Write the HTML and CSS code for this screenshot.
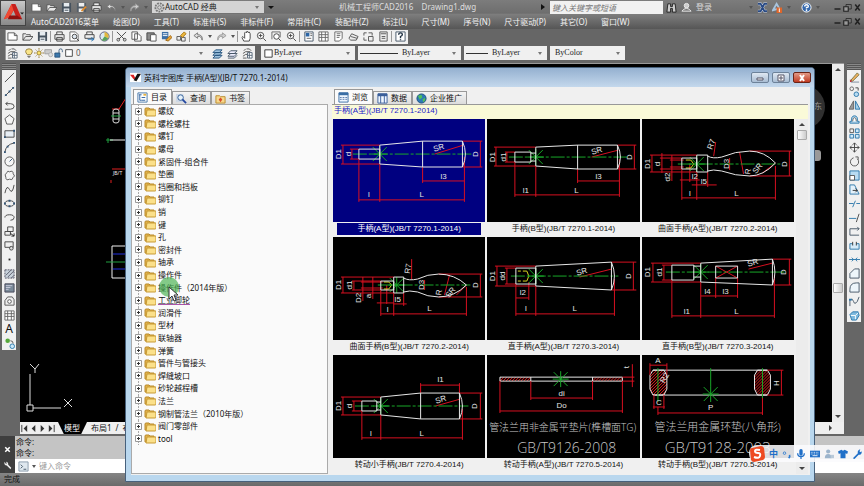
FILE: index.html
```html
<!DOCTYPE html>
<html lang="zh-CN">
<head>
<meta charset="utf-8">
<title>机械工程师CAD2016</title>
<link rel="stylesheet" href="styles.css">
</head>
<body>
<svg class="defs" aria-hidden="true">
  <defs>
    <symbol id="new" viewBox="0 0 12 12"><path d="M1 2h7l3 3v5H1z" fill="#fff" stroke="#555"/><path d="M8 2v3h3" fill="none" stroke="#555"/></symbol>
    <symbol id="open" viewBox="0 0 12 12"><path d="M1 10V3h3l1 1h4v2M1 10l3-4h8l-3 4z" fill="#e8e8e8" stroke="#555"/></symbol>
    <symbol id="save" viewBox="0 0 12 12"><path d="M1 1h10v10H1z" fill="#46525e"/><path d="M3 1h6v4H3zM3 7h6v4H3z" fill="#e6ebef"/><path d="M4 9h4" stroke="#46525e"/></symbol>
    <symbol id="saveas" viewBox="0 0 12 12"><path d="M1 1h10v10H1z" fill="#555f69"/><path d="M3 1h6v4H3zM3 7h5v4H3z" fill="#eee"/><path d="M6 10l5-5" stroke="#e08b2c" stroke-width="2"/></symbol>
    <symbol id="print" viewBox="0 0 12 12"><path d="M3 4V1h6v3M1 4h10v5H1zM3 7h6v4H3z" fill="#eee" stroke="#444"/></symbol>
    <symbol id="preview" viewBox="0 0 12 12"><path d="M1 1h6l3 3v7H1z" fill="#fff" stroke="#666"/><circle cx="6" cy="6" r="2.5" fill="#dfe8f0" stroke="#444"/><path d="M8 8l3 3" stroke="#444"/></symbol>
    <symbol id="publish" viewBox="0 0 12 12"><path d="M3 4V1h6v3M1 4h10v4H1z" fill="#eee" stroke="#444"/><path d="M4 9h6M8 7l3 2-3 2" stroke="#2470b0" fill="none"/></symbol>
    <symbol id="globe" viewBox="0 0 12 12"><circle cx="6" cy="6" r="5" fill="#dbe9f3" stroke="#557"/><path d="M6 6V1a5 5 0 0 1 4 7z" fill="#e2b73d"/><path d="M6 6l4 2a5 5 0 0 1-7 2z" fill="#58a35a"/></symbol>
    <symbol id="cut" viewBox="0 0 12 12"><path d="M1 1l8 8M11 1L3 9" stroke="#444" fill="none"/><circle cx="2.500" cy="9.500" r="1.500" fill="none" stroke="#444"/><circle cx="9.500" cy="9.500" r="1.500" fill="none" stroke="#444"/></symbol>
    <symbol id="copy" viewBox="0 0 12 12"><path d="M1 1h6v8H1zM4 3h4l3 3v5H4z" fill="#fff" stroke="#555"/></symbol>
    <symbol id="paste" viewBox="0 0 12 12"><path d="M1 2h8v8H1z" fill="#8b8b8b" stroke="#444"/><path d="M5 4h6v7H5z" fill="#fff" stroke="#555"/></symbol>
    <symbol id="match" viewBox="0 0 12 12"><path d="M1 1h7v8H1z" fill="#3b6ea6"/><path d="M2 3h5M2 5h5" stroke="#fff"/><path d="M5 10l5-5 2 2-4 4z" fill="#e7a43a" stroke="#9a6511"/></symbol>
    <symbol id="block" viewBox="0 0 12 12"><path d="M1 6h4v4H1zM6 7h4v4H6z" fill="#eee" stroke="#555"/><path d="M5 5l4-4 2 2-4 4z" fill="#eeb940" stroke="#a87511"/></symbol>
    <symbol id="undo" viewBox="0 0 12 12"><path d="M5 2L1 5l4 3V6q4-1 5 4 1-6-5-6z" fill="#ddd" stroke="#777"/></symbol>
    <symbol id="redo" viewBox="0 0 12 12"><path d="M7 2l4 3-4 3V6q-4-1-5 4-1-6 5-6z" fill="#ccc" stroke="#999"/></symbol>
    <symbol id="pan" viewBox="0 0 12 12"><path d="M3 11L1 7l1-1 2 2V2l1-1 1 1V1l1-1 1 2 1-1 1 2v5l-1 3z" fill="#fff" stroke="#444"/></symbol>
    <symbol id="zoom" viewBox="0 0 12 12"><circle cx="5" cy="5" r="3.500" fill="#fff" stroke="#444"/><path d="M8 8l3 3M5 3v4M3 5h4" stroke="#444"/></symbol>
    <symbol id="zoomwin" viewBox="0 0 12 12"><path d="M1 9V1h9v6" fill="none" stroke="#666"/><circle cx="6" cy="6" r="3" fill="#fff" stroke="#444"/><path d="M8 8l3 3" stroke="#444"/></symbol>
    <symbol id="props" viewBox="0 0 12 12"><path d="M2 1h9v10H2z" fill="#fff" stroke="#456"/><path d="M3 2h4v4H3z" fill="#2b65a5"/><path d="M4 8h5M8 3h2M8 5h2" stroke="#666"/></symbol>
    <symbol id="grid" viewBox="0 0 12 12"><path d="M1 1h10v10H1zM1 4h10M1 7h10M4 1v10M8 1v10" fill="#fff" stroke="#666"/></symbol>
    <symbol id="palette" viewBox="0 0 12 12"><path d="M2 1h8v7l-3 3H2zM4 3h4M4 5h4M4 7h3" fill="#fff" stroke="#666"/></symbol>
    <symbol id="cloudset" viewBox="0 0 12 12"><path d="M1 8L4 3l7 3-2 4H3zM3 6l7 2" fill="#eee" stroke="#555"/></symbol>
    <symbol id="markup" viewBox="0 0 12 12"><path d="M1 5V2h3M6 2h4v3M1 7v3h3M6 6h5v5H6z" fill="#eee" stroke="#555"/></symbol>
    <symbol id="calc" viewBox="0 0 12 12"><path d="M2 1h8v10H2zM3 3h6M4 6h4M4 8h4" fill="#eee" stroke="#555"/></symbol>
    <symbol id="help" viewBox="0 0 12 12"><path d="M1 1h10v10H1z" fill="#fff" stroke="#456"/><path d="M4 4q0-2 2-2t2 2q0 1-2 2v2M6 9v1" fill="none" stroke="#234" stroke-width="1.500"/></symbol>
    <symbol id="layers" viewBox="0 0 12 12"><path d="M1 6l3-3h7L8 6zM1 9l3-3h7L8 9zM1 11h7l3-3" fill="#eef" stroke="#456"/></symbol>
    <symbol id="layersb" viewBox="0 0 12 12"><path d="M1 5l3-3h7L8 5zM1 8l3-3h7L8 8zM1 11l3-3h7l-3 3z" fill="#9fc3df" stroke="#24527c"/></symbol>
    <symbol id="layermgr" viewBox="0 0 12 12"><path d="M1 6l3-2h5M1 9l3-2h2M1 11h4M4 1l-2 2M5 1h3l2 2" fill="none" stroke="#555"/><path d="M6 5h5v6H6zM8 5v6M6 8h5" fill="#fff" stroke="#567"/></symbol>
    <symbol id="bulb" viewBox="0 0 12 12"><path d="M4 8Q2 6 2 4q0-3 4-3t4 3q0 2-2 4z" fill="#f9e58a" stroke="#8c7430"/><path d="M4 10h4M5 11h2" stroke="#555"/></symbol>
    <symbol id="sun" viewBox="0 0 12 12"><circle cx="6" cy="6" r="2.500" fill="#fbe36b" stroke="#8c6d20"/><path d="M6 0v2M6 10v2M0 6h2M10 6h2M2 2l1 1M9 9l1 1M2 10l1-1M9 3l1-1" stroke="#8c6d20"/></symbol>
    <symbol id="freeze" viewBox="0 0 12 12"><path d="M1 2h8v5H1z" fill="#ccc" stroke="#999"/><circle cx="8" cy="8" r="2.500" fill="#ddd" stroke="#aaa"/></symbol>
    <symbol id="lock" viewBox="0 0 12 12"><path d="M1 6h6v5H1z" fill="#3c78ac" stroke="#254f77"/><path d="M6 6V3q0-2 2-2t2 2v2" fill="none" stroke="#357"/></symbol>
    <symbol id="swatch" viewBox="0 0 12 12"><path d="M2 2h8v8H2z" fill="#fff" stroke="#333"/></symbol>
    <symbol id="gear" viewBox="0 0 12 12"><circle cx="6" cy="6" r="4.500" fill="none" stroke="#777" stroke-width="2" stroke-dasharray="2 1"/><circle cx="6" cy="6" r="2" fill="none" stroke="#777"/></symbol>
    <symbol id="bino" viewBox="0 0 12 12"><path d="M2 2h3v3h2V2h3l1 9H7V7H5v4H1z" fill="#ccc" stroke="#222"/></symbol>
    <symbol id="user" viewBox="0 0 12 12"><circle cx="6" cy="4" r="2.500" fill="#ccc" stroke="#eee"/><path d="M1 10q2-3 5-3t5 3z" fill="#777" stroke="#eee"/></symbol>
    <symbol id="exchange" viewBox="0 0 12 12"><path d="M1 2h3l4 8h3M11 2H8L4 10H1" fill="none" stroke="#c6d4ea" stroke-width="3"/><path d="M1 2h3l4 8h3M11 2H8L4 10H1" fill="none" stroke="#2a4a83" stroke-width="2"/></symbol>
    <symbol id="a360" viewBox="0 0 12 12"><path d="M1 9l4-7 3 5z" fill="none" stroke="#a8c4de" stroke-width="2"/><path d="M5 6h6v6H5z" fill="#e0662a"/><path d="M8 7v4" stroke="#fff"/></symbol>
    <symbol id="helpc" viewBox="0 0 12 12"><circle cx="6" cy="6" r="5" fill="#3468ad" stroke="#fff"/><path d="M4 5q0-2 2-2t2 2q0 1-2 1v1M6 8v2" fill="none" stroke="#fff" stroke-width="1.500"/></symbol>
    <symbol id="minus" viewBox="0 0 12 12"><path d="M2 8h8" stroke="#222" stroke-width="2"/></symbol>
    <symbol id="restore" viewBox="0 0 12 12"><path d="M4 2h7v6H4z" fill="#777" stroke="#222"/><path d="M1 5h6v6H1z" fill="#999" stroke="#222" stroke-width="1.500"/></symbol>
    <symbol id="close" viewBox="0 0 12 12"><path d="M3 2l6 8M9 2l-6 8" stroke="#222" stroke-width="2"/></symbol>
    <symbol id="s-first" viewBox="0 0 10 10"><path d="M2 1v8" stroke="#333"/><path d="M8 1v8L4 5z" fill="#333"/></symbol>
    <symbol id="s-prev" viewBox="0 0 10 10"><path d="M7 1v8L3 5z" fill="#333"/></symbol>
    <symbol id="s-next" viewBox="0 0 10 10"><path d="M3 1v8l4-4z" fill="#333"/></symbol>
    <symbol id="s-last" viewBox="0 0 10 10"><path d="M8 1v8" stroke="#333"/><path d="M2 1v8l4-4z" fill="#333"/></symbol>

    <symbol id="d-line" viewBox="0 0 12 12"><path d="M1 11L11 1" stroke="#444"/></symbol>
    <symbol id="d-ray" viewBox="0 0 12 12"><path d="M1 11L11 1" stroke="#444"/><path d="M1 10h2M5 6h2M9 2h2" stroke="#357" stroke-width="2"/></symbol>
    <symbol id="d-pline" viewBox="0 0 12 12"><path d="M1 10h6q4 0 4-3T7 4H2M4 2L2 4l2 2" fill="none" stroke="#444"/></symbol>
    <symbol id="d-poly" viewBox="0 0 12 12"><path d="M6 1l5 4-2 6H3L1 5z" fill="#f6f6f6" stroke="#555"/></symbol>
    <symbol id="d-rect" viewBox="0 0 12 12"><path d="M1 3h10v7H1z" fill="#e8eef4" stroke="#444"/><path d="M0 10h2M10 3h2" stroke="#357" stroke-width="2"/></symbol>
    <symbol id="d-arc" viewBox="0 0 12 12"><path d="M1 11Q2 3 11 1" fill="none" stroke="#444"/><path d="M0 11h2M3 5h2M10 1h2" stroke="#357" stroke-width="2"/></symbol>
    <symbol id="d-circle" viewBox="0 0 12 12"><circle cx="6" cy="6" r="5" fill="#f6f6f6" stroke="#555"/><path d="M6 6l3-3" stroke="#357"/></symbol>
    <symbol id="d-cloud" viewBox="0 0 12 12"><path d="M3 3q1-3 3-1 4-2 4 2 3 3 0 4-1 4-4 2-4 2-4-2-2-3 1-5z" fill="#f5f5f5" stroke="#555"/></symbol>
    <symbol id="d-spline" viewBox="0 0 12 12"><path d="M1 10Q3 0 6 6t5-5" fill="none" stroke="#444"/></symbol>
    <symbol id="d-ell" viewBox="0 0 12 12"><ellipse cx="6" cy="6" rx="5" ry="3" fill="none" stroke="#444"/><path d="M0 6h2M10 6h2M5 3h2M5 9h2" stroke="#357" stroke-width="2"/></symbol>
    <symbol id="d-ellarc" viewBox="0 0 12 12"><path d="M1 6q0-3 5-3t5 3-4 3" fill="none" stroke="#444"/></symbol>
    <symbol id="d-ins" viewBox="0 0 12 12"><path d="M4 1h6v5H4zM1 6h6v4H1z" fill="#eee" stroke="#444"/><path d="M7 8l4 3M11 8v3H8" stroke="#222" fill="none"/></symbol>
    <symbol id="d-make" viewBox="0 0 12 12"><path d="M1 2h9v6H1z" fill="#eee" stroke="#444"/><circle cx="8" cy="9" r="2" fill="#ddd" stroke="#444"/></symbol>
    <symbol id="d-point" viewBox="0 0 12 12"><path d="M5 6h2" stroke="#222" stroke-width="2"/></symbol>
    <symbol id="d-hatch" viewBox="0 0 12 12"><path d="M1 2h10v9H1z" fill="#c8d2db" stroke="#556" stroke-dasharray="2 1"/><path d="M2 8l6-6M4 10l7-7M8 11l3-3" stroke="#556"/></symbol>
    <symbol id="d-grad" viewBox="0 0 12 12"><path d="M1 2h10v9H1z" fill="#7a8a99" stroke="#445"/><path d="M2 4h7M2 6h5M2 8h3" stroke="#ccd"/></symbol>
    <symbol id="d-region" viewBox="0 0 12 12"><path d="M1 10V5l3-4h5l2 3v6z" fill="#eee" stroke="#555"/><circle cx="6" cy="6" r="2" fill="#fff" stroke="#555"/></symbol>
    <symbol id="d-add" viewBox="0 0 12 12"><circle cx="4" cy="3" r="2.500" fill="#55a83a"/><circle cx="9" cy="9" r="2.500" fill="#cde8f8" stroke="#2b7cb0"/><path d="M7 3q3 0 3 3" fill="none" stroke="#555"/></symbol>
    <symbol id="m-erase" viewBox="0 0 12 12"><path d="M2 9l7-8 2 2-7 7z" fill="#f0b060" stroke="#774"/><path d="M1 8l3 3H1z" fill="#c33"/><path d="M2 11h9" stroke="#789"/></symbol>
    <symbol id="m-copy" viewBox="0 0 12 12"><circle cx="3" cy="3" r="2" fill="none" stroke="#666"/><circle cx="8" cy="9" r="2.500" fill="#b9dcf2" stroke="#2b76aa"/><path d="M7 2h3v3" fill="none" stroke="#444"/></symbol>
    <symbol id="m-mirror" viewBox="0 0 12 12"><path d="M5 1v9H0z" fill="#999" stroke="#666"/><path d="M7 1v9h5z" fill="#a5cfe9" stroke="#2b76aa"/></symbol>
    <symbol id="m-offset" viewBox="0 0 12 12"><path d="M1 10h10V8H9q1-6-3-6T3 8H1z" fill="#b8daef" stroke="#2b76aa"/><path d="M4 8q0-4 2-4t2 4" fill="#fff" stroke="#666"/></symbol>
    <symbol id="m-array" viewBox="0 0 12 12"><path d="M1 1h4v4H1z" fill="#eee" stroke="#555"/><path d="M7 1h4v4H7zM1 7h4v4H1zM7 7h4v4H7z" fill="#cfe8f8" stroke="#2b76aa"/></symbol>
    <symbol id="m-move" viewBox="0 0 12 12"><path d="M6 1v10M1 6h10M4 3l2-2 2 2M4 9l2 2 2-2M3 4L1 6l2 2M9 4l2 2-2 2" fill="none" stroke="#444"/></symbol>
    <symbol id="m-rot" viewBox="0 0 12 12"><path d="M5 2a4.500 4.500 0 1 0 4 1M7 1h3v3" fill="none" stroke="#555"/></symbol>
    <symbol id="m-scale" viewBox="0 0 12 12"><path d="M1 1h10v10H1z" fill="#b9dcf2" stroke="#2b76aa"/><path d="M1 6h5v5H1z" fill="#fff" stroke="#555"/></symbol>
    <symbol id="m-stretch" viewBox="0 0 12 12"><path d="M1 1h5l5 10H1z" fill="#e4f1fa" stroke="#2b76aa"/><path d="M4 7h5M7 5l2 2-2 2" fill="none" stroke="#333"/></symbol>
    <symbol id="m-trim" viewBox="0 0 12 12"><path d="M0 6h5M7 3L4 10M8 6h4" stroke="#2b76aa"/></symbol>
    <symbol id="m-extend" viewBox="0 0 12 12"><path d="M0 7h8" stroke="#2b76aa"/><path d="M11 2L8 11" stroke="#444"/></symbol>
    <symbol id="m-break" viewBox="0 0 12 12"><path d="M1 4h3M8 4h3M1 4v6h10V4" fill="#d7ebf8" stroke="#2b76aa"/><path d="M4 2v4M8 2v4" stroke="#333"/></symbol>
    <symbol id="m-open" viewBox="0 0 12 12"><path d="M11 3H1v7h10M9 1l2 2-2 2" fill="none" stroke="#456"/></symbol>
    <symbol id="m-join" viewBox="0 0 12 12"><path d="M0 6h12M3 4l2 2-2 2M9 4L7 6l2 2" fill="none" stroke="#2b76aa"/></symbol>
    <symbol id="m-chamf" viewBox="0 0 12 12"><path d="M1 11V6l5-5h5v10z" fill="#eef6fb" stroke="#456"/></symbol>
    <symbol id="m-fillet" viewBox="0 0 12 12"><path d="M1 11V8q0-7 7-7h3v10z" fill="#eef6fb" stroke="#456"/></symbol>
    <symbol id="m-blend" viewBox="0 0 12 12"><path d="M1 11V4q3-2 4 2t4 0l2-5" fill="none" stroke="#456"/><path d="M0 4h3" stroke="#2b76aa" stroke-width="2"/></symbol>
    <symbol id="m-expl" viewBox="0 0 12 12"><path d="M1 5l3-3h6l1 4-3 5H3z" fill="#7db9de" stroke="#2b76aa"/><path d="M2 6h5v4M7 6l3-3" fill="none" stroke="#fff"/></symbol>

    <symbol id="folder" viewBox="0 0 12 11"><path d="M1 9V3q0-1 1-1h3l1 1h4v6z" fill="#e2b24a" stroke="#b98a2a"/><path d="M2 10l1-6h9v5q0 1-1 1z" fill="#fbe08a" stroke="#c79a35"/></symbol>
    <symbol id="plus" viewBox="0 0 7 7"><path d="M.5.5h6v6h-6z" fill="#fff" stroke="#999"/><path d="M2 3.500h3M3.500 2v3" stroke="#333"/></symbol>
    <symbol id="t-dir" viewBox="0 0 12 12"><path d="M1 1h10v10H1z" fill="#fff" stroke="#4475a8"/><path d="M2 3h3M5 6h4M5 9h4M3 3v6h2" stroke="#2b5fa0" fill="none"/><path d="M7 2h3v2H7z" fill="#e7b13c"/></symbol>
    <symbol id="t-find" viewBox="0 0 12 12"><path d="M0 1h8v9H0z" fill="#cdd8e6"/><circle cx="5" cy="5" r="3" fill="#e6f2fb" stroke="#2e5b94"/><path d="M7 7l4 4" stroke="#2347a0" stroke-width="2"/></symbol>
    <symbol id="t-mark" viewBox="0 0 12 12"><path d="M1 3h4l1 1h5v7H1z" fill="#f7d78b" stroke="#b98a2a"/><path d="M4 7l2-2 2 2-2 3z" fill="#d94f2b"/></symbol>
    <symbol id="t-table" viewBox="0 0 12 12"><path d="M1 1h10v10H1z" fill="#eef6ff" stroke="#3a6ea5"/><path d="M1 2h10" stroke="#3a6ea5" stroke-width="3"/><path d="M2 6h2M5 6h2M8 6h2M2 8h2M5 8h2M8 8h2" stroke="#57a" stroke-width="1"/></symbol>
    <symbol id="t-cols" viewBox="0 0 12 12"><path d="M1 1h10v10H1z" fill="#eef6ff" stroke="#3a5e9a"/><path d="M1 2h10" stroke="#3a5e9a" stroke-width="3"/><path d="M4 3v8M8 3v8" stroke="#3a5e9a"/></symbol>
    <symbol id="t-globe" viewBox="0 0 12 12"><circle cx="6" cy="6" r="5" fill="#2d78b8" stroke="#1b4f7d"/><path d="M2 3l4-1 1 3-3 2zM7 7l3-2v3l-2 2z" fill="#4fc05b"/></symbol>
    <g id="star"><path d="M-8 0H8M0-8V8M-7-7L7 7M-7 7L7-7"/></g>
    <pattern id="hatch" width="3" height="3" patternUnits="userSpaceOnUse"><path d="M0 3L3 0" stroke="#f02020"/></pattern>
  </defs>
</svg>

<div class="app">
  <header class="top">
    <button class="logo" aria-label="应用程序菜单">
      <svg viewBox="0 0 25 25"><path d="M3 19L11 3h4l7 16-6-2-3-7-4 7z" fill="#c8201c"/><path d="M11 3l2 7-4 7-6 2z" fill="#ef4a33"/><path d="M9 15h8l5 4H7z" fill="#8f1210"/><path d="M20 12h4l-2 2z" fill="#222"/></svg>
    </button>
    <div class="top-rows">
      <div class="titlebar">
        <div class="icons quick">
          <button aria-label="新建"><svg><use href="#new"/></svg></button><button aria-label="打开"><svg><use href="#open"/></svg></button><button aria-label="保存"><svg><use href="#save"/></svg></button><button aria-label="另存为"><svg><use href="#saveas"/></svg></button><button aria-label="打印"><svg><use href="#print"/></svg></button><button aria-label="放弃"><svg><use href="#undo"/></svg></button><i class="arrow"></i><button aria-label="重做"><svg><use href="#redo"/></svg></button><i class="arrow"></i>
        </div>
        <div class="combo workspace"><svg><use href="#gear"/></svg><select aria-label="工作空间"><option>AutoCAD 经典</option></select></div>
        <i class="arrow dark"></i>
        <h1>机械工程师CAD2016 &nbsp; &nbsp;Drawing1.dwg</h1>
        <i class="arrow side"></i>
        <input class="search" type="text" aria-label="搜索" placeholder="键入关键字或短语">
        <div class="icons account">
          <button aria-label="搜索"><svg><use href="#bino"/></svg></button><button class="login"><svg><use href="#user"/></svg>登录</button>
        </div>
        <div class="icons services">
          <i class="arrow"></i><button aria-label="Exchange"><svg><use href="#exchange"/></svg></button><button aria-label="A360"><svg><use href="#a360"/></svg></button><i class="arrow"></i>
          <button class="help" aria-label="帮助"><svg><use href="#helpc"/></svg></button><i class="arrow"></i>
        </div>
        <div class="winctl"><button aria-label="最小化"><svg><use href="#minus"/></svg></button><button aria-label="还原"><svg><use href="#restore"/></svg></button><button aria-label="关闭"><svg><use href="#close"/></svg></button></div>
      </div>
      <nav class="menubar">
        <a href="#">AutoCAD2016菜单</a><a href="#">绘图(D)</a><a href="#">工具(T)</a><a href="#">标准件(S)</a><a href="#">非标件(F)</a><a href="#">常用件(C)</a><a href="#">装配件(Z)</a><a href="#">标注(L)</a><a href="#">尺寸(M)</a><a href="#">序号(N)</a><a href="#">尺寸驱动(P)</a><a href="#">其它(O)</a><a href="#">窗口(W)</a>
        <div class="winctl"><button aria-label="最小化图形"><svg><use href="#minus"/></svg></button><button aria-label="还原图形"><svg><use href="#restore"/></svg></button><button aria-label="关闭图形"><svg><use href="#close"/></svg></button></div>
      </nav>
    </div>
  </header>

  <div class="toolbar-row">
    <div class="toolbar icons">
      <button aria-label="新建"><svg><use href="#new"/></svg></button><button aria-label="打开"><svg><use href="#open"/></svg></button><button aria-label="保存"><svg><use href="#save"/></svg></button><i class="sep"></i>
      <button aria-label="打印"><svg><use href="#print"/></svg></button><button aria-label="预览"><svg><use href="#preview"/></svg></button><button aria-label="发布"><svg><use href="#publish"/></svg></button><button aria-label="三维"><svg><use href="#globe"/></svg></button><i class="sep"></i>
      <button aria-label="剪切"><svg><use href="#cut"/></svg></button><button aria-label="复制"><svg><use href="#copy"/></svg></button><button aria-label="粘贴"><svg><use href="#paste"/></svg></button><button aria-label="特性匹配"><svg><use href="#match"/></svg></button><button aria-label="块编辑器"><svg><use href="#block"/></svg></button><i class="sep"></i>
      <button aria-label="放弃"><svg><use href="#undo"/></svg></button><i class="arrow"></i><button aria-label="重做"><svg><use href="#redo"/></svg></button><i class="arrow"></i><i class="sep"></i>
      <button aria-label="平移"><svg><use href="#pan"/></svg></button><button aria-label="实时缩放"><svg><use href="#zoom"/></svg></button><button aria-label="窗口缩放"><svg><use href="#zoomwin"/></svg></button><button aria-label="上一个"><svg><use href="#zoom"/></svg></button><i class="sep"></i>
      <button aria-label="特性"><svg><use href="#props"/></svg></button><button aria-label="设计中心"><svg><use href="#grid"/></svg></button><button aria-label="工具选项板"><svg><use href="#palette"/></svg></button><button aria-label="图纸集"><svg><use href="#cloudset"/></svg></button><button aria-label="标记集"><svg><use href="#markup"/></svg></button><button aria-label="计算器"><svg><use href="#calc"/></svg></button><i class="sep"></i>
      <button aria-label="帮助"><svg><use href="#help"/></svg></button>
    </div>
  </div>
  <div class="toolbar-row second">
    <div class="toolbar layer-bar">
      <button aria-label="图层特性"><svg><use href="#layermgr"/></svg></button>
      <div class="combo layer"><svg><use href="#bulb"/></svg><svg><use href="#sun"/></svg><svg><use href="#freeze"/></svg><svg><use href="#lock"/></svg><svg><use href="#swatch"/></svg><select aria-label="图层"><option>0</option></select></div>
      <button aria-label="置为当前"><svg><use href="#layersb"/></svg></button><button aria-label="上一图层"><svg><use href="#layers"/></svg></button><button aria-label="图层状态"><svg><use href="#layermgr"/></svg></button>
    </div>
    <div class="props">
      <div class="combo color"><svg><use href="#swatch"/></svg><select aria-label="颜色"><option>ByLayer</option></select></div>
      <div class="combo ltype"><i class="rule"></i><select aria-label="线型"><option>ByLayer</option></select></div>
      <div class="combo lweight"><i class="rule"></i><select aria-label="线宽"><option>ByLayer</option></select></div>
      <div class="combo pstyle"><select aria-label="打印样式"><option>ByColor</option></select></div>
    </div>
  </div>

  <main class="work">
    <div class="side">
      <div class="palette">
        <i class="grip"></i>
        <button aria-label="直线"><svg><use href="#d-line"/></svg></button><button aria-label="构造线"><svg><use href="#d-ray"/></svg></button><button aria-label="多段线"><svg><use href="#d-pline"/></svg></button><button aria-label="多边形"><svg><use href="#d-poly"/></svg></button><button aria-label="矩形"><svg><use href="#d-rect"/></svg></button><button aria-label="圆弧"><svg><use href="#d-arc"/></svg></button><button aria-label="圆"><svg><use href="#d-circle"/></svg></button><button aria-label="修订云线"><svg><use href="#d-cloud"/></svg></button><button aria-label="样条曲线"><svg><use href="#d-spline"/></svg></button><button aria-label="椭圆"><svg><use href="#d-ell"/></svg></button><button aria-label="椭圆弧"><svg><use href="#d-ellarc"/></svg></button><button aria-label="插入块"><svg><use href="#d-ins"/></svg></button><button aria-label="创建块"><svg><use href="#d-make"/></svg></button><button aria-label="点"><svg><use href="#d-point"/></svg></button><button aria-label="图案填充"><svg><use href="#d-hatch"/></svg></button><button aria-label="渐变色"><svg><use href="#d-grad"/></svg></button><button aria-label="面域"><svg><use href="#d-region"/></svg></button><button aria-label="表格"><svg><use href="#grid"/></svg></button><button class="letter">A</button><button aria-label="添加选定对象"><svg><use href="#d-add"/></svg></button>
      </div>
    </div>
    <div class="view">
      <div class="canvas">
        <svg class="sketch" viewBox="0 0 110 230" fill="none">
          <path d="M99 45L106 34M92 45h8" stroke="#e02020"/><path d="M93 47q0-2 3-2t3 2v10q0 2-3 2t-3-2zM93 49h6M93 55h6" stroke="#ddd"/><path d="M91 52h10M86 76h7M88 74v5" stroke="#20a040"/><path d="M90 76h16" stroke="#eee"/><path d="M92 105h14" stroke="#e02020"/><path d="M91 116v3" stroke="#e02020"/>
          <path d="M106 182H92v32h14" stroke="#eee"/><path d="M93 190h13M93 205h13" stroke="#2030e0"/><path d="M86 198h20" stroke="#20a040"/>
          <text x="93" y="111">JB/T</text>
        </svg>
        <svg class="ucs" viewBox="0 0 50 56" fill="none" stroke="#ddd"><path d="M4 42h6v6H4zM7 42V11M10 45h28M7 1l5 5 4-5M12 6v4M41 36l8 8M49 36l-8 8"/></svg>
        <div class="compass">东</div>
        <div class="cube"></div>
      </div>
      <div class="vscroll"><i class="up"></i><b></b><i class="down"></i></div>
      <div class="sheets"><button aria-label="第一个"><svg><use href="#s-first"/></svg></button><button aria-label="上一张"><svg><use href="#s-prev"/></svg></button><button aria-label="下一张"><svg><use href="#s-next"/></svg></button><button aria-label="最后"><svg><use href="#s-last"/></svg></button><a class="on" href="#">模型</a><a href="#">布局1</a><span>/</span><a href="#">布局2</a><i class="right"></i></div>
      <i class="corner"></i>
    </div>
    <div class="side right">
      <div class="palette">
        <i class="grip"></i>
        <button aria-label="删除"><svg><use href="#m-erase"/></svg></button><button aria-label="复制"><svg><use href="#m-copy"/></svg></button><button aria-label="镜像"><svg><use href="#m-mirror"/></svg></button><button aria-label="偏移"><svg><use href="#m-offset"/></svg></button><button aria-label="阵列"><svg><use href="#m-array"/></svg></button><button aria-label="移动"><svg><use href="#m-move"/></svg></button><button aria-label="旋转"><svg><use href="#m-rot"/></svg></button><button aria-label="缩放"><svg><use href="#m-scale"/></svg></button><button aria-label="拉伸"><svg><use href="#m-stretch"/></svg></button><button aria-label="修剪"><svg><use href="#m-trim"/></svg></button><button aria-label="延伸"><svg><use href="#m-extend"/></svg></button><button aria-label="打断于点"><svg><use href="#m-open"/></svg></button><button aria-label="打断"><svg><use href="#m-break"/></svg></button><button aria-label="合并"><svg><use href="#m-join"/></svg></button><button aria-label="倒角"><svg><use href="#m-chamf"/></svg></button><button aria-label="圆角"><svg><use href="#m-fillet"/></svg></button><button aria-label="光顺曲线"><svg><use href="#m-blend"/></svg></button><button aria-label="分解"><svg><use href="#m-expl"/></svg></button>
      </div>
    </div>
  </main>

  <section class="command">
    <div class="cmd-grip"><svg viewBox="0 0 12 12"><path d="M3 3l6 6M9 3l-6 6" stroke="#fff" stroke-width="2"/></svg><svg viewBox="0 0 12 12"><path d="M2 1q-1 5 3 5l5 5 1-2-4-4Q7 1 4 1l1 2-1 1z" fill="#eee"/></svg></div>
    <div class="cmd-body">
      <p>命令:</p><p>命令:</p>
      <label class="cmd-line"><svg viewBox="0 0 12 12"><path d="M1 1h10v10H1z" fill="#dfe8ef" stroke="#89a"/><path d="M3 4l2 2-2 2M6 9h3" fill="none" stroke="#456"/></svg><i class="arrow"></i><input type="text" aria-label="命令行" placeholder="键入命令"></label>
    </div>
  </section>
  <footer class="status">完成</footer>

  <section class="dialog" role="dialog" aria-labelledby="dlg-title">
    <header class="dlg-title">
      <svg viewBox="0 0 12 12"><path d="M0 1h12v10H0z" fill="#fff"/><path d="M0 3h4l2 4-2 1z" fill="#d22"/><path d="M4 9l4-7h4L7 10z" fill="#111"/></svg>
      <h2 id="dlg-title">英科宇图库 手柄(A型)(JB/T 7270.1-2014)</h2>
      <div class="dlg-ctl"><button aria-label="最小化"><svg viewBox="0 0 12 8"><path d="M3 4h6v2H3z" fill="#fff" stroke="#556"/></svg></button><button aria-label="最大化"><svg viewBox="0 0 12 8"><path d="M3 1h6v6H3zM5 3h2v2H5z" fill="#fff" stroke="#556"/></svg></button><button class="x" aria-label="关闭"><svg viewBox="0 0 12 8"><path d="M4 1l4 6M8 1L4 7" stroke="#fff" stroke-width="2"/></svg></button></div>
    </header>
    <div class="dlg-body">
      <div class="pane left-pane">
        <div class="tabs"><button class="on"><svg><use href="#t-dir"/></svg>目录</button><button><svg><use href="#t-find"/></svg>查询</button><button><svg><use href="#t-mark"/></svg>书签</button></div>
        <ul class="tree">
          <li><svg class="pm"><use href="#plus"/></svg><svg class="fd"><use href="#folder"/></svg>螺纹</li>
          <li><svg class="pm"><use href="#plus"/></svg><svg class="fd"><use href="#folder"/></svg>螺栓螺柱</li>
          <li><svg class="pm"><use href="#plus"/></svg><svg class="fd"><use href="#folder"/></svg>螺钉</li>
          <li><svg class="pm"><use href="#plus"/></svg><svg class="fd"><use href="#folder"/></svg>螺母</li>
          <li><svg class="pm"><use href="#plus"/></svg><svg class="fd"><use href="#folder"/></svg>紧固件-组合件</li>
          <li><svg class="pm"><use href="#plus"/></svg><svg class="fd"><use href="#folder"/></svg>垫圈</li>
          <li><svg class="pm"><use href="#plus"/></svg><svg class="fd"><use href="#folder"/></svg>挡圈和挡板</li>
          <li><svg class="pm"><use href="#plus"/></svg><svg class="fd"><use href="#folder"/></svg>铆钉</li>
          <li><svg class="pm"><use href="#plus"/></svg><svg class="fd"><use href="#folder"/></svg>销</li>
          <li><svg class="pm"><use href="#plus"/></svg><svg class="fd"><use href="#folder"/></svg>键</li>
          <li><svg class="pm"><use href="#plus"/></svg><svg class="fd"><use href="#folder"/></svg>孔</li>
          <li><svg class="pm"><use href="#plus"/></svg><svg class="fd"><use href="#folder"/></svg>密封件</li>
          <li><svg class="pm"><use href="#plus"/></svg><svg class="fd"><use href="#folder"/></svg>轴承</li>
          <li><svg class="pm"><use href="#plus"/></svg><svg class="fd"><use href="#folder"/></svg>操作件</li>
          <li class="hover"><svg class="pm"><use href="#plus"/></svg><svg class="fd"><use href="#folder"/></svg>操作件（2014年版）<svg class="pointer" viewBox="0 0 22 26"><circle cx="10" cy="10" r="10" fill="#43b04b" opacity=".65"/><path d="M10 10v12l3-3 2 5 2-1-2-5h4z" fill="#fff" stroke="#333"/></svg></li>
          <li><svg class="pm"><use href="#plus"/></svg><svg class="fd"><use href="#folder"/></svg><a href="#">工业脚轮</a></li>
          <li><svg class="pm"><use href="#plus"/></svg><svg class="fd"><use href="#folder"/></svg>润滑件</li>
          <li><svg class="pm"><use href="#plus"/></svg><svg class="fd"><use href="#folder"/></svg>型材</li>
          <li><svg class="pm"><use href="#plus"/></svg><svg class="fd"><use href="#folder"/></svg>联轴器</li>
          <li><svg class="pm"><use href="#plus"/></svg><svg class="fd"><use href="#folder"/></svg>弹簧</li>
          <li><svg class="pm"><use href="#plus"/></svg><svg class="fd"><use href="#folder"/></svg>管件与管接头</li>
          <li><svg class="pm"><use href="#plus"/></svg><svg class="fd"><use href="#folder"/></svg>焊缝坡口</li>
          <li><svg class="pm"><use href="#plus"/></svg><svg class="fd"><use href="#folder"/></svg>砂轮越程槽</li>
          <li><svg class="pm"><use href="#plus"/></svg><svg class="fd"><use href="#folder"/></svg>法兰</li>
          <li><svg class="pm"><use href="#plus"/></svg><svg class="fd"><use href="#folder"/></svg>钢制管法兰（2010年版）</li>
          <li><svg class="pm"><use href="#plus"/></svg><svg class="fd"><use href="#folder"/></svg>阀门零部件</li>
          <li><svg class="pm"><use href="#plus"/></svg><svg class="fd"><use href="#folder"/></svg>tool</li>
        </ul>
      </div>
      <div class="pane right-pane">
        <div class="tabs"><button class="on"><svg><use href="#t-table"/></svg>浏览</button><button><svg><use href="#t-cols"/></svg>数据</button><button><svg><use href="#t-globe"/></svg>企业推广</button></div>
        <p class="crumb">手柄(A型)(JB/T 7270.1-2014)</p>
        <div class="browser">
          <div class="cards">
            <figure class="on">
              <svg viewBox="0 0 153 103"><g class="r"><path d="M10 26v19M8 26h39M8 45h39M19 30v10M17 30h9M17 40h9M130 22h20M130 48h20M148 22v26M26 40v43M47 45v38M132 38v45M26 81h106M90 48v16M90 62h42M102 35L131 26"/></g><g class="g"><path class="cl" d="M20 35h120"/><use href="#star" x="47" y="35"/></g><g class="w"><path d="M26 30h21v10H26zM47 26v19M47 26L90 22h40v26H90L47 45M90 22v26M130 22q6 13 0 26"/></g><g class="t"><text transform="translate(8 35) rotate(-90)">D1</text><text transform="translate(18 35) rotate(-90)">d</text><text transform="translate(146 35) rotate(-90)">D</text><text transform="translate(107 31) rotate(-17)">SR</text><text x="111" y="60">l3</text><text x="36" y="78">l</text><text x="89" y="78">L</text></g></svg>
              <figcaption>手柄(A型)(JB/T 7270.1-2014)</figcaption>
            </figure>
            <figure>
              <svg viewBox="0 0 153 103"><g class="r"><path d="M9 28v19M7 28h42M7 47h42M20 33v10M18 33h10M18 43h10M131 26h19M131 50h19M148 26v24M28 43v35M49 47v31M133 40v38M28 76h105M91 50v14M91 62h42M105 38l27-7"/></g><g class="g"><path class="cl" d="M22 38h120"/><use href="#star" x="49" y="38"/></g><g class="w"><path d="M28 33h16v10H28zM44 34h5M44 42h5M49 28v19M49 28l42-2h40v24H91l-42-3M91 26v24M131 26q6 12 0 24"/></g><g class="t"><text transform="translate(8 38) rotate(-90)">D1</text><text transform="translate(19 38) rotate(-90)">d1</text><text transform="translate(146 38) rotate(-90)">D</text><text transform="translate(111 34) rotate(-17)">SR</text><text x="112" y="60">l3</text><text x="39" y="74">l1</text><text x="90" y="74">L</text></g></svg>
              <figcaption>手柄(B型)(JB/T 7270.1-2014)</figcaption>
            </figure>
            <figure>
              <svg viewBox="0 0 153 103"><g class="r"><path d="M10 36v17M8 36h47M8 53h47M20 34v20M18 39h22M18 50h22M30 36v26M28 41h14M28 48h14M108 32h42M108 57h42M148 32v25M40 50v31M55 53v28M134 47v34M40 79h94M38 61h20M50 66h25M48 45v18M66 53v15M74 23l-2 14M88 39v12M98 33l4 22M121 54l13-10"/></g><g class="y"><path d="M44 41h5l3 4-3 4h-5"/></g><g class="g"><path class="cl" d="M36 45h105"/><use href="#star" x="55" y="45"/></g><g class="w"><path d="M40 39h15v11H40zM55 36h11v17H55zM66 37q5 3 14 1 14-6 28-6 15 0 26 12-12 13-26 13-14 0-28-5-9-2-14 0"/></g><g class="t"><text transform="translate(8 45) rotate(-90)">D1</text><text transform="translate(18 45) rotate(-90)">d</text><text transform="translate(28 58) rotate(-90)">d2</text><text transform="translate(72 26) rotate(-70)">R7</text><text transform="translate(87 45) rotate(-90)">D3</text><text transform="translate(109 53) rotate(-80)">R</text><text transform="translate(118 51) rotate(-50)">SR</text><text transform="translate(146 45) rotate(-90)">D</text><text x="53" y="60">l2</text><text x="62" y="65">l5</text><text x="48" y="77">l</text><text x="95" y="77">L</text></g></svg>
              <figcaption>曲面手柄(A型)(JB/T 7270.2-2014)</figcaption>
            </figure>
            <figure>
              <svg viewBox="0 0 153 103"><g class="r"><path d="M10 40v16M8 40h53M8 56h53M21 44v9M19 44h29M19 53h29M30 40v24M28 45h22M28 51h22M40 40v22M106 37h44M106 60h44M148 37v23M48 53v26M61 56v23M134 50v29M48 77h86M44 66h17M54 48v19M71 56v13M61 67h13M79 22v20M92 43v10M117 38l-5 20M124 58l10-10"/></g><g class="y"><path d="M51 45h5l3 3-3 4h-5"/></g><g class="g"><path class="cl" d="M45 48h93"/><use href="#star" x="64" y="48"/></g><g class="w"><path d="M48 44h13v9H48zM61 40h10v16H61zM71 41q5 3 14 1 10-5 21-5 16 0 28 11-12 12-28 12-11 0-21-5-9-2-14 0"/></g><g class="t"><text transform="translate(8 48) rotate(-90)">D1</text><text transform="translate(19 48) rotate(-90)">d1</text><text transform="translate(28 61) rotate(-90)">D2</text><text transform="translate(38 59) rotate(-90)">a</text><text transform="translate(78 32) rotate(-80)">R7</text><text transform="translate(91 48) rotate(-90)">D3</text><text transform="translate(109 56) rotate(-80)">R</text><text transform="translate(120 57) rotate(-50)">SR</text><text transform="translate(146 48) rotate(-90)">D</text><text x="65" y="65">l5</text><text x="55" y="75">l</text><text x="97" y="74">L</text></g></svg>
              <figcaption>曲面手柄(B型)(JB/T 7270.2-2014)</figcaption>
            </figure>
            <figure>
              <svg viewBox="0 0 153 103"><g class="r"><path d="M10 29v20M8 29h41M8 49h41M20 31v16M18 31h11M18 47h11M125 25h25M125 53h25M147 25v28M29 47v32M49 49v30M128 42v37M29 77h99M42 45v18M29 61h13M93 40l32-8"/></g><g class="y"><path d="M31 34h3M36 34h4M31 44h3M36 44h4M40 34l2 5-2 5"/></g><g class="g"><path class="cl" d="M24 39h108"/><use href="#star" x="49" y="39"/></g><g class="w"><path d="M29 31h20v16H29zM49 29v20M49 29l76-4v28l-76-4M125 25q6 14 0 28"/></g><g class="t"><text transform="translate(8 39) rotate(-90)">D1</text><text transform="translate(18 39) rotate(-90)">dd</text><text transform="translate(145 39) rotate(-90)">D</text><text transform="translate(96 37) rotate(-17)">SR</text><text x="36" y="58">l2</text><text x="39" y="74">l</text><text x="88" y="74">L</text></g></svg>
              <figcaption>直手柄(A型)(JB/T 7270.3-2014)</figcaption>
            </figure>
            <figure>
              <svg viewBox="0 0 153 103"><g class="r"><path d="M11 26v19M9 26h50M9 45h50M22 28v15M20 28h10M20 43h10M131 22h19M131 48h19M148 22v26M30 43v38M59 45v36M133 38v43M30 79h103M74 41v20M96 41v20M59 59h37M74 29l22 12M74 41l22-12M107 32l24-6"/></g><g class="g"><path class="cl" d="M24 35h120"/><use href="#star" x="59" y="35"/></g><g class="w"><path d="M30 28h22v15H30zM52 29h7M52 40h7M59 26v19M59 26l72-4v26l-72-3M131 22q5 13 0 26M74 29h22v12H74z"/></g><g class="t"><text transform="translate(8 35) rotate(-90)">D1</text><text transform="translate(20 35) rotate(-90)">d1</text><text transform="translate(145 35) rotate(-90)">D</text><text transform="translate(112 28) rotate(-17)">SR</text><text x="66" y="57">l4</text><text x="84" y="57">l3</text><text x="45" y="77">l1</text><text x="95" y="77">L</text></g></svg>
              <figcaption>直手柄(B型)(JB/T 7270.3-2014)</figcaption>
            </figure>
            <figure>
              <svg viewBox="0 0 153 103"><g class="r"><path d="M10 42v18M8 42h40M8 60h40M21 46v10M19 46h10M19 56h10M127 38h23M127 64h23M148 38v26M29 56v29M48 60v25M130 54v31M29 83h101M88 38V28M127 38V28M88 30h39M103 51l25-7"/></g><g class="g"><path class="cl" d="M22 51h114"/><use href="#star" x="48" y="51"/></g><g class="w"><path d="M29 46h15v10H29zM44 47h4M44 55h4M48 42v18M48 42l40-4h39v26H88l-40-4M88 38v26M127 38q6 13 0 26"/></g><g class="t"><text transform="translate(8 51) rotate(-90)">D1</text><text transform="translate(19 51) rotate(-90)">d</text><text transform="translate(145 51) rotate(-90)">D</text><text transform="translate(109 47) rotate(-17)">SR</text><text x="108" y="27">l1</text><text x="38" y="81">l</text><text x="89" y="81">L</text></g></svg>
              <figcaption>转动小手柄(JB/T 7270.4-2014)</figcaption>
            </figure>
            <figure>
              <svg viewBox="0 0 153 103"><path d="M13 22h31v4H13zM106 22h30v4h-30z" fill="url(#hatch)"/><g class="w"><path d="M13 22h123v4H13zM44 22v4M106 22v4"/></g><g class="r"><path d="M13 26v32M136 26v32M13 56h123M44 26v19M106 26v19M44 43h62M136 22h12M136 26h12M146 9v23"/></g><g class="g"><use href="#star" x="74" y="24"/></g><g class="t"><text x="75" y="41">di</text><text x="75" y="53">Do</text><text transform="translate(143 12) rotate(-90)">t</text></g><g class="big"><text class="cn" x="76" y="76">管法兰用非金属平垫片(榫槽面TG)</text><text x="80" y="98">GB/T9126-2008</text></g></svg>
              <figcaption>转动手柄(A型)(JB/T 7270.5-2014)</figcaption>
            </figure>
            <figure>
              <svg viewBox="0 0 153 103"><path d="M11 15h11l3 5v14l-3 6H11l-3-6V20zM116 15h10l3 5v14l-3 6h-10l-3-6V20z" fill="url(#hatch)"/><g class="w"><path d="M11 15h115M11 40h115M11 15h11l3 5v14l-3 6H11l-3-6V20zM116 15h10l3 5v14l-3 6h-10l-3-6V20z"/></g><g class="r"><path d="M8 10h17M8 8v12M25 8v12M12 40v14M22 40v14M11 52h12M16 52v8M121 40v20M16 58h105M126 15h16M126 40h16M140 15v25"/></g><g class="g"><path d="M69 13v18M16 13v34M121 13v30"/><use href="#star" x="69" y="39"/></g><g class="t"><text x="16" y="8">A</text><text x="17" y="50">C</text><text x="69" y="55">P</text><text transform="translate(25 24) rotate(-60)">R2</text><text transform="translate(138 28) rotate(-90)">H</text></g><g class="big"><text class="cn2" x="76" y="76">管法兰用金属环垫(八角形)</text><text class="wide" x="76" y="98">GB/T9128-2003</text></g></svg>
              <figcaption>转动手柄(B型)(JB/T 7270.5-2014)</figcaption>
            </figure>
          </div>
          <div class="vscroll inner"><i class="up"></i><b></b><i class="down"></i></div>
        </div>
      </div>
    </div>
  </section>

  <div class="ime">
    <svg viewBox="0 0 16 16"><path d="M1 4q0-2 2-2l9-2q2 0 3 2l1 9q0 2-2 3l-9 2q-2 0-3-2z" fill="#ee4a22"/><path d="M11 4q-5-1-5 1t3 2 2 3-6 1" fill="none" stroke="#fff" stroke-width="2"/></svg>
    <b>中</b>
    <svg viewBox="0 0 12 12"><circle cx="3" cy="5" r="1.500" fill="none" stroke="#2a7ad0"/><path d="M9 7q1 2-1 4" stroke="#2a7ad0" stroke-width="2" fill="none"/></svg>
    <svg viewBox="0 0 12 12"><path d="M4 2q0-2 2-2t2 2v4q0 2-2 2T4 6z" fill="#1f6fc8"/><path d="M2 5q0 4 4 4t4-4M6 9v3" fill="none" stroke="#1f6fc8" stroke-width="1.500"/></svg>
    <svg viewBox="0 0 12 12"><path d="M0 2h12v8H0z" fill="#1f6fc8"/><path d="M1 4h10M1 6h10" stroke="#fff" stroke-dasharray="1 1"/><path d="M3 8h6" stroke="#fff"/></svg>
    <svg viewBox="0 0 12 12"><circle cx="5" cy="3" r="2.500" fill="#9cb4cc"/><path d="M1 11q0-5 4-5t4 5z" fill="#9cb4cc"/><path d="M8 7h4v4H8z" fill="#b9c9d8"/></svg>
    <svg viewBox="0 0 12 12"><path d="M4 1q2 2 4 0l4 2-1 3-2-1v6H3V5L1 6 0 3z" fill="#1f6fc8"/></svg>
    <svg viewBox="0 0 12 12"><path d="M1 11l6-6q-1-3 3-5L9 3l2 1 1-2q0 5-4 5l-5 5z" fill="#1f6fc8"/></svg>
  </div>
</div>
</body>
</html>
```
FILE: styles.css
```css
* { box-sizing: border-box; }
html, body { margin: 0; height: 100%; }
body {
  font: 8px/12px "Noto Sans", "Noto Sans CJK SC", sans-serif;
  color: #111;
  background: #666;
}
h1, h2, p, ul, figure { margin: 0; padding: 0; font: inherit; }
a { color: inherit; text-decoration: none; }
button { display: flex; align-items: center; justify-content: center; padding: 0; border: 0; background: none; font: inherit; color: inherit; }
input, select { min-width: 0; padding: 0; border: 0; background: none; font: inherit; color: inherit; appearance: none; }
svg { display: block; flex: none; width: 11px; height: 11px; }
.defs { position: absolute; width: 0; height: 0; }

.app { position: relative; display: flex; flex-direction: column; min-height: 100vh; overflow: hidden; }

/* header */
.top { display: flex; height: 29px; color: #f2f2f2; background: linear-gradient(#7c7c7c, #6e6e6e 45%, #7d7d7d 50%, #565656); }
.logo { width: 26px; height: 26px; border: 1px solid #444; background: linear-gradient(#c8c8c8, #8a8a8a); }
.logo svg { width: 24px; height: 24px; }
.top-rows { flex: 1; min-width: 0; }
.titlebar { display: flex; align-items: center; height: 14px; padding-left: 5px; }
.titlebar h1 { flex: 1; text-align: center; white-space: nowrap; color: #dedede; }
.icons { display: flex; align-items: center; gap: 4px; }
.quick { width: 121px; }
.arrow { flex: none; width: 4px; border: 2px solid transparent; border-top: 3px solid #555; border-bottom: 0; }
.arrow.dark { width: 6px; margin-left: 4px; border-width: 3px; border-top-color: #111; border-bottom: 0; }
.arrow.side { width: 4px; height: 6px; margin-right: 3px; border: 3px solid transparent; border-left: 4px solid #111; border-right: 0; }
.combo { position: relative; display: flex; align-items: center; height: 12px; padding: 0 2px; background: #f0f0f0; color: #222; }
.combo select { flex: 1; height: 12px; }
.combo::after { content: ""; margin-right: 3px; border: 2px solid transparent; border-top: 3px solid #777; border-bottom: 0; }
.workspace { width: 112px; background: #d4d4d4; }
.search { width: 113px; height: 13px; padding: 0 2px; background: #f1f1f1; font-style: italic; }
.search::placeholder { color: #777; opacity: 1; }
.account { width: 86px; padding-left: 3px; }
.login { gap: 4px; color: #d8d8d8; }
.services { width: 84px; }
.services .help { margin-left: 6px; }
.winctl { display: flex; gap: 1px; width: 31px; margin-left: auto; }
.winctl svg { width: 9px; height: 9px; }
.menubar { display: flex; align-items: center; gap: 14px; height: 15px; padding-left: 5px; white-space: nowrap; }

/* toolbars */
.toolbar-row { display: flex; align-items: center; gap: 6px; height: 15px; padding-left: 5px; }
.toolbar-row.second { height: 19px; padding-bottom: 1px; }
.toolbar { height: 14px; padding: 0 2px 0 1px; background: #f0f0f0; border-left: 1px solid #999; }
.sep { flex: none; width: 1px; height: 11px; margin: 0 -1px 0 -2px; background: #999; }
.layer-bar { display: flex; align-items: center; gap: 4px; width: 250px; }
.layer { flex: 1; }
.layer svg { width: 10px; height: 10px; }
.layer select { margin-left: 2px; color: #555; }
.props { display: flex; gap: 3px; font-family: "Liberation Serif", "Noto Sans CJK SC", serif; }
.props .combo { height: 14px; }
.color { width: 94px; }
.ltype { width: 103px; }
.lweight { width: 83px; }
.pstyle { width: 75px; }
.pstyle select { padding-left: 3px; }
.rule { flex: none; width: 38px; height: 1px; margin-right: 4px; background: #333; }
.lweight .rule { width: 22px; }

/* drawing area */
.work { flex: 1; display: flex; min-height: 0; }
.side { width: 20px; padding-left: 2px; }
.side.right { padding-left: 3px; }
.palette { display: flex; flex-direction: column; align-items: center; width: 14px; background: #f0f0f0; }
.palette .grip { width: 100%; height: 7px; background: repeating-linear-gradient(#555 0 1px, #888 1px 2px); }
.palette button { height: 14px; }
.palette .letter { font-size: 12px; }
.view { flex: 1; display: grid; grid-template-columns: 1fr 12px; grid-template-rows: 1fr 12px; padding-bottom: 2px; border-top: 1px solid #999; }
.canvas { position: relative; background: #000; }
.sketch { position: absolute; left: 0; top: 0; width: 110px; height: 230px; }
.sketch text { font-size: 5px; fill: #eee; }
.ucs { position: absolute; left: 3px; bottom: 3px; width: 50px; height: 56px; overflow: visible; }
.compass { position: absolute; right: 7px; top: 20px; width: 50px; height: 46px; padding: 16px 3px; border-radius: 50%; background: #303030; color: #999; text-align: right; }
.cube { position: absolute; right: 11px; top: 86px; width: 20px; height: 11px; border-radius: 3px; background: #999; }
.vscroll { display: flex; flex-direction: column; align-items: center; padding: 4px 1px; background: #ececec; }
.vscroll b { width: 10px; height: 10px; border: 1px solid #aaa; border-radius: 1px; background: linear-gradient(90deg, #fff, #ccc); }
.vscroll i { width: 6px; border: 3px solid transparent; }
.vscroll .up { margin-bottom: auto; border-top: 0; border-bottom: 3px solid #444; }
.vscroll .down { margin-top: 122px; border-bottom: 0; border-top: 3px solid #444; }
.sheets { display: flex; align-items: center; background: #efefef; }
.sheets button { width: 9px; }
.sheets button svg { width: 9px; height: 9px; }
.sheets a { padding: 0 4px; }
.sheets .on { height: 12px; margin-left: 2px; padding: 0 7px 0 6px; background: #000; color: #fff; clip-path: polygon(0 0, 100% 0, 80% 100%, 20% 100%); }
.sheets .right { margin-left: auto; border: 3px solid transparent; border-left-color: #444; border-right: 0; }
.corner { background: #efefef; }

/* command line and status */
.command { display: flex; height: 37px; background: #c4c4c4; }
.cmd-grip { display: flex; flex-direction: column; align-items: center; justify-content: space-around; width: 15px; padding-top: 5px; background: #3f3f3f; }
.cmd-grip svg { width: 9px; height: 9px; }
.cmd-body { flex: 1; display: flex; flex-direction: column; }
.cmd-body p { height: 11px; padding-left: 1px; line-height: 12px; }
.cmd-line { display: flex; align-items: center; gap: 3px; flex: 1; margin-top: 1px; padding-left: 3px; background: #fff; }
.cmd-line input { flex: 1; }
.cmd-line input::placeholder { color: #999; opacity: 1; }
.status { height: 13px; padding: 0 4px; background: linear-gradient(#858585, #6a6a6a); }

/* library dialog */
.dialog {
  position: absolute; top: 67px; right: 49px; bottom: 4px; left: 125px;
  display: flex; flex-direction: column;
  padding: 0 4px 6px 5px;
  border: 1px solid #47617c; border-radius: 4px 4px 0 0;
  background: #b9d7ee;
}
.dialog > .dlg-title { display: flex; align-items: center; gap: 3px; height: 19px; margin: 0 -4px 0 -5px; padding: 0 3px 0 4px; border-radius: 3px 3px 0 0; background: linear-gradient(#94b0d0, #c4d8ec); }
.dlg-ctl { display: flex; gap: 3px; margin-left: auto; }
.dlg-ctl button { width: 18px; height: 11px; border: 1px solid #6d8299; border-radius: 2px; background: linear-gradient(#dfe8f2, #a9bdd3); }
.dlg-ctl svg { width: 12px; height: 8px; }
.dlg-ctl .x { border-color: #6b2417; background: linear-gradient(#e39a87, #c03b22); }
.dlg-body { flex: 1; display: flex; gap: 4px; min-height: 0; padding: 2px 2px 1px 0; background: #f0f0f0; }
.pane { display: flex; flex-direction: column; min-height: 0; }
.left-pane { flex: 0 0 197px; }
.right-pane { flex: 1; min-width: 0; }
.tabs { display: flex; align-items: flex-end; height: 15px; padding-left: 2px; }
.tabs button { gap: 3px; height: 13px; padding: 0 4px 0 3px; border: 1px solid #999; border-bottom: 0; background: linear-gradient(#f4f4f4, #dcdcdc); }
.tabs .on { height: 15px; background: #fbfbfb; }
.tree { flex: 1; display: flex; flex-direction: column; padding: 0 0 28px 3px; border: 1px solid #aaa; background: #fafafa; list-style: none; }
.tree li { position: relative; flex: 1; display: flex; align-items: center; white-space: nowrap; }
.tree li::before { content: ""; position: absolute; left: 3px; top: 0; bottom: 0; border-left: 1px dotted #aaa; }
.tree a { text-decoration: underline; text-decoration-color: #a5a; }
.pm { position: relative; width: 7px; height: 7px; margin-right: 2px; }
.fd { width: 12px; height: 11px; margin-right: 2px; }
.tree .pointer { position: absolute; left: 24px; top: -4px; z-index: 1; width: 22px; height: 26px; }
.crumb { height: 15px; padding: 0 2px; border-top: 1px solid #999; background: #fafad8; color: #2222c8; font-family: "Liberation Sans", "Noto Sans CJK SC", sans-serif; }
.browser { flex: 1; display: flex; gap: 2px; min-height: 0; padding-left: 1px; }
.cards { flex: 1; display: grid; grid-template-columns: repeat(3, 1fr); gap: 0 2px; align-content: start; min-width: 0; }
.cards figure { min-width: 0; }
.cards svg { width: 100%; height: 103px; background: #000; }
.cards figcaption { width: max-content; min-width: 144px; height: 12px; margin: 1px auto 2px; text-align: center; font-family: "Liberation Sans", "Noto Sans CJK SC", sans-serif; white-space: nowrap; }
.cards .on svg, .cards .on figcaption { background: #000080; }
.cards .on figcaption { color: #fff; }
.inner { width: 12px; padding: 4px 0; }
.inner .up { margin-bottom: 4px; }
.inner .down { margin-top: auto; }

/* part drawings */
.r, .g, .w, .y { fill: none; stroke-width: 1; }
.r { stroke: #d81020; }
.g { stroke: #18a828; }
.w { stroke: #e8e8e8; }
.y { stroke: #d8d820; }
.cl { stroke-dasharray: 14 2 3 2; }
.t text, .big text { fill: #e4e4e4; font-family: "Liberation Sans", "Noto Sans CJK SC", sans-serif; font-size: 8px; text-anchor: middle; }
.big text { fill: #c8c8c8; font-family: "Open Sans", "Noto Sans CJK SC", sans-serif; font-size: 14px; font-weight: 300; }
.big .cn { font-size: 10px; }
.big .cn2 { font-size: 11px; }
.big .wide { font-size: 15px; }

/* input method bar */
.ime { position: absolute; right: 0; bottom: 24px; display: flex; align-items: center; gap: 4px; height: 17px; padding-right: 2px; border-radius: 8px 0 0 8px; background: rgba(250, 251, 253, .88); color: #1f6fc8; }
.ime svg { width: 10px; height: 10px; }
.ime svg:first-child { width: 16px; height: 16px; }
.ime b { font-size: 9px; }
```
